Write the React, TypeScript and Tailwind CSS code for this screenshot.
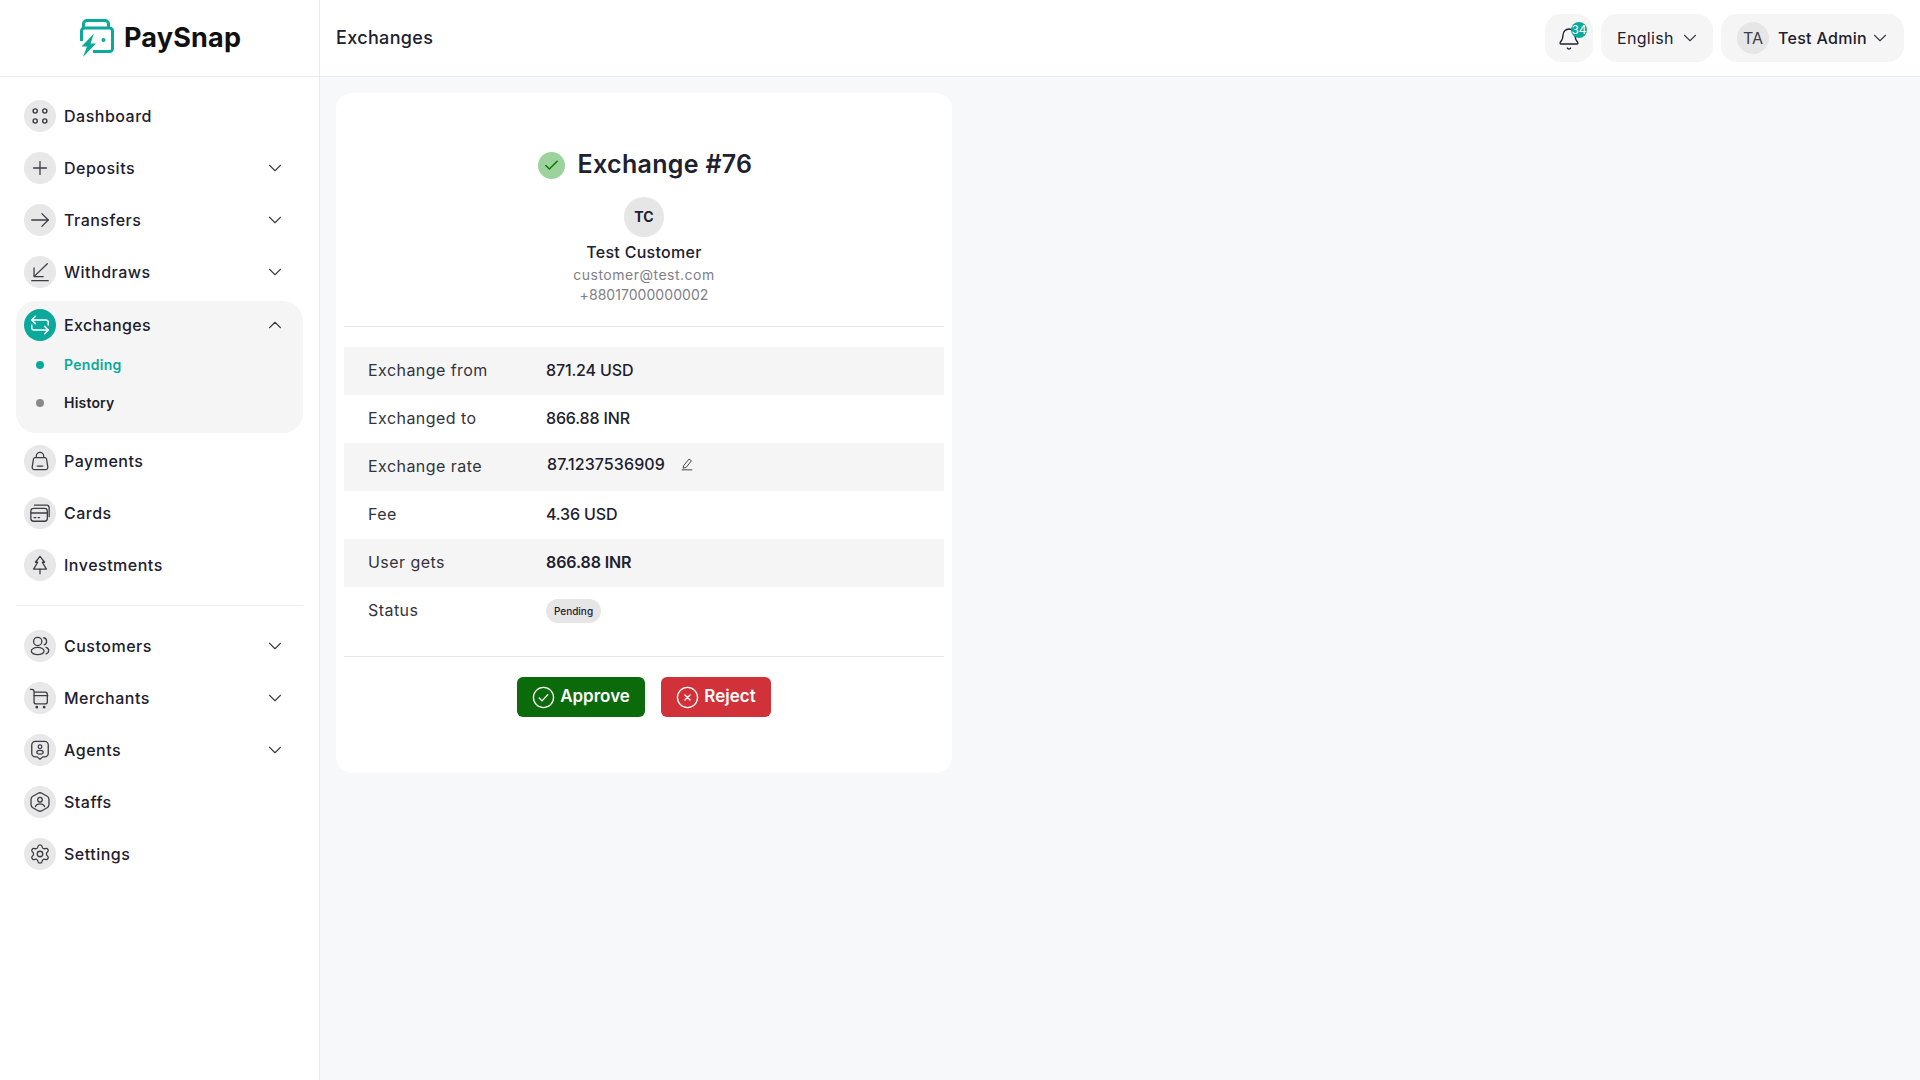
import React from "react";
import { ChevronDown, ChevronUp, Plus, Settings, Bell, Check } from "lucide-react";

const FONT = "font-['Inter','Liberation_Sans',sans-serif]";

type IconProps = { className?: string };

const svgProps = {
  viewBox: "0 0 24 24",
  fill: "none",
  stroke: "currentColor",
  strokeWidth: 1.4,
  strokeLinecap: "round" as const,
  strokeLinejoin: "round" as const,
};

function DotsIcon({ className }: IconProps) {
  return (
    <svg {...svgProps} className={className}>
      <circle cx="7.2" cy="7" r="2.1" />
      <circle cx="16.800" cy="7" r="2.1" />
      <circle cx="7.2" cy="17" r="2.1" />
      <circle cx="16.800" cy="17" r="2.1" />
    </svg>
  );
}

function ArrowIcon({ className }: IconProps) {
  return (
    <svg {...svgProps} className={className}>
      <path d="M3 12h18" />
      <path d="m14 5 7 7-7 7" />
    </svg>
  );
}

function WithdrawIcon({ className }: IconProps) {
  return (
    <svg {...svgProps} className={className}>
      <path d="M20 3 6 16.500" />
      <path d="M5.500 7.500v9.500h10" />
      <path d="M3 21.500h18" />
    </svg>
  );
}

function ExchangeIcon({ className }: IconProps) {
  return (
    <svg {...svgProps} strokeWidth={1.6} className={className}>
      <path d="M7 2.500 3 6.500l4 4" />
      <path d="M3 6.500h15.500a2.500 2.500 0 0 1 2.500 2.500v3" />
      <path d="m17 21.500 4-4-4-4" />
      <path d="M21 17.500H5.500A2.500 2.500 0 0 1 3 15v-3" />
    </svg>
  );
}

function BagIcon({ className }: IconProps) {
  return (
    <svg {...svgProps} className={className}>
      <path d="M8 8V6.500a4 4 0 0 1 8 0V8" />
      <path d="M6.800 8.200h10.400c1 0 1.700.7 1.900 1.600l1.400 8.600c.3 1.600-.9 3.100-2.500 3.100H6c-1.600 0-2.800-1.500-2.500-3.100l1.400-8.600c.2-.9.9-1.600 1.900-1.600z" />
      <path d="M9 17.500h6" />
    </svg>
  );
}

function CardsIcon({ className }: IconProps) {
  return (
    <svg {...svgProps} className={className}>
      <rect x="2" y="7" width="18" height="14" rx="3" />
      <path d="M2 12h18" />
      <path d="M5.500 17h2M10 17h1.500" />
      <path d="M6 3.500h13a3 3 0 0 1 3 3v9.500" />
    </svg>
  );
}

function TreeIcon({ className }: IconProps) {
  return (
    <svg {...svgProps} className={className}>
      <path d="M12 2.500 7 9h2.500L5 16.500h14L14.500 9H17z" />
      <path d="M12 16.500v5" />
    </svg>
  );
}

function UsersIcon({ className }: IconProps) {
  return (
    <svg {...svgProps} className={className}>
      <circle cx="9.500" cy="7" r="4.500" />
      <ellipse cx="9.500" cy="17.500" rx="7" ry="4" />
      <path d="M16 3c2 .3 3.200 2 3.200 4s-1.200 3.300-2.700 3.800" />
      <path d="M18.500 13.500c1.800.5 3 1.800 3 3.500s-1.200 3-3 3.500" />
    </svg>
  );
}

function CartIcon({ className }: IconProps) {
  return (
    <svg {...svgProps} className={className}>
      <path d="M1.500 2.500h1.500c1.500 0 2.500 1 2.500 2.500v11c0 1.500 1 2.500 2.500 2.500h9.500c1.500 0 2.500-1 2.500-2.500V8c0-1.500-1-2.500-2.500-2.500H5.500" />
      <path d="M5.500 9.500h15" />
      <circle cx="8.500" cy="22" r=".8" fill="currentColor" />
      <circle cx="16.500" cy="22" r=".8" fill="currentColor" />
    </svg>
  );
}

function AgentIcon({ className }: IconProps) {
  return (
    <svg {...svgProps} className={className}>
      <path d="M7 2.500h10a4 4 0 0 1 4 4v9a4 4 0 0 1-4 4h-2l-3 2.500-3-2.500H7a4 4 0 0 1-4-4v-9a4 4 0 0 1 4-4z" />
      <circle cx="12" cy="8.500" r="2" />
      <ellipse cx="12" cy="14.500" rx="3.500" ry="2" />
    </svg>
  );
}

function StaffIcon({ className }: IconProps) {
  return (
    <svg {...svgProps} className={className}>
      <path d="M10 2.500a4 4 0 0 1 4 0l5.800 3.300a4 4 0 0 1 2 3.400v5.600a4 4 0 0 1-2 3.400L14 21.500a4 4 0 0 1-4 0l-5.800-3.300a4 4 0 0 1-2-3.400V9.200a4 4 0 0 1 2-3.400z" />
      <circle cx="12" cy="9.500" r="2.500" />
      <path d="M7 17c.8-2 2.700-3 5-3s4.200 1 5 3" />
    </svg>
  );
}

function PencilIcon({ className }: IconProps) {
  return (
    <svg {...svgProps} strokeWidth={1.6} className={className}>
      <path d="M6.500 14.500 15.500 3.500l4 3-9 11.500-4.500 1z" />
      <path d="M3.500 22h17" />
    </svg>
  );
}

function CircleCheck({ className }: IconProps) {
  return (
    <svg {...svgProps} className={className}>
      <circle cx="12" cy="12" r="10.500" />
      <path d="m7.500 12.500 3 3 6-6.500" />
    </svg>
  );
}

function CircleX({ className }: IconProps) {
  return (
    <svg {...svgProps} className={className}>
      <circle cx="12" cy="12" r="10.500" />
      <path d="m9.300 9.300 5.400 5.400M14.700 9.300l-5.400 5.400" />
    </svg>
  );
}

function Logo() {
  return (
    <svg viewBox="0 0 34 38" className="w-[34px] h-[38px]" fill="none">
      <path d="M3.500 10V5a3.500 3.500 0 0 1 3.500-3.500h18A3.500 3.500 0 0 1 28.500 5v5" stroke="#0ba99b" strokeWidth="3" />
      <path
        d="M1.500 22V12a3 3 0 0 1 3-3h25a3 3 0 0 1 3 3v17.500a3 3 0 0 1-3 3H13"
        stroke="#0ba99b"
        strokeWidth="3"
      />
      <circle cx="23.500" cy="21" r="2" fill="#0ba99b" />
      <path
        d="M14 14.500 1.500 27.500H7L3 38l13-13.500h-5.500l3.500-10z"
        fill="#0ba99b"
        stroke="#fff"
        strokeWidth="1.2"
        strokeLinejoin="round"
        paintOrder="stroke"
      />
    </svg>
  );
}

function NavRow({
  label,
  icon,
  chevron,
}: {
  label: string;
  icon: React.ReactNode;
  chevron?: boolean;
}) {
  return (
    <div className="flex items-center h-[52px] pl-6 pr-[33px]">
      <span className="flex items-center justify-center w-8 h-8 rounded-full bg-[#e8e8e8] text-[#3c3c44] shrink-0">
        {icon}
      </span>
      <span className="ml-2 flex-1 text-base font-medium tracking-[0.5px] text-[#20202e]">{label}</span>
      {chevron && <ChevronDown className="w-[22px] h-[22px] text-[#3c3c44]" strokeWidth={1.2} />}
    </div>
  );
}

function Sidebar() {
  const ic = "w-[22px] h-[22px]";
  return (
    <aside className="w-[320px] shrink-0 bg-white border-r border-[#e9eaec] flex flex-col">
      <div className="h-[77px] border-b border-[#e9eaec] flex items-center pl-[80px] gap-[10px]">
        <Logo />
        <span className="text-[27px] font-bold text-[#111] tracking-[0.2px]">PaySnap</span>
      </div>
      <nav className="pt-[13px] flex flex-col">
        <NavRow label="Dashboard" icon={<DotsIcon className="w-6 h-6" />} />
        <NavRow label="Deposits" chevron icon={<Plus className={ic} strokeWidth={1.4} />} />
        <NavRow label="Transfers" chevron icon={<ArrowIcon className={ic} />} />
        <NavRow label="Withdraws" chevron icon={<WithdrawIcon className={ic} />} />

        <div className="mx-4 mt-[3px] mb-[2px] pt-[3px] pb-[11px] rounded-[20px] bg-[#f5f5f5]">
          <div className="flex items-center h-[42px] pl-2 pr-[17px]">
            <span className="flex items-center justify-center w-8 h-8 rounded-full bg-[#0ba99b] text-white">
              <ExchangeIcon className={ic} />
            </span>
            <span className="ml-2 flex-1 text-base font-medium tracking-[0.35px] text-[#20202e]">Exchanges</span>
            <ChevronUp className="w-[22px] h-[22px] text-[#3c3c44]" strokeWidth={1.2} />
          </div>
          <div className="flex items-center h-[38px] pl-5">
            <span className="w-2 h-2 rounded-full bg-[#0ba99b]" />
            <span className="ml-[20px] text-sm font-semibold tracking-[0.3px] text-[#0ba99b]">Pending</span>
          </div>
          <div className="flex items-center h-[38px] pl-5">
            <span className="w-2 h-2 rounded-full bg-[#8a8a8a]" />
            <span className="ml-[20px] text-sm font-semibold tracking-[0.2px] text-[#20202e]">History</span>
          </div>
        </div>

        <NavRow label="Payments" icon={<BagIcon className={ic} />} />
        <NavRow label="Cards" icon={<CardsIcon className={ic} />} />
        <NavRow label="Investments" icon={<TreeIcon className={ic} />} />

        <div className="mx-4 mt-[14px] mb-[14px] h-px bg-[#eeeff1]" />

        <NavRow label="Customers" chevron icon={<UsersIcon className={ic} />} />
        <NavRow label="Merchants" chevron icon={<CartIcon className={ic} />} />
        <NavRow label="Agents" chevron icon={<AgentIcon className={ic} />} />
        <NavRow label="Staffs" icon={<StaffIcon className={ic} />} />
        <NavRow label="Settings" icon={<Settings className={ic} strokeWidth={1.4} />} />
      </nav>
    </aside>
  );
}

function Header() {
  return (
    <header className="h-[77px] shrink-0 bg-white border-b border-[#e9eaec] flex items-center pl-4 pr-4">
      <h1 className="flex-1 text-lg font-medium tracking-[0.35px] text-[#20202e]">Exchanges</h1>
      <div className="flex items-center gap-2">
        <div className="relative w-12 h-12 rounded-2xl bg-[#f5f5f5] flex items-center justify-center">
          <Bell className="w-6 h-6 text-[#20202e] mt-[2px]" strokeWidth={1.3} />
          <span className="absolute left-[26px] top-2 w-4 h-4 rounded-full bg-[#0ba99b] text-white text-xs leading-4 text-center">
            34
          </span>
        </div>
        <div className="h-12 w-[112px] rounded-2xl bg-[#f5f5f5] flex items-center pl-4 gap-[5px] text-base text-[#20202e] tracking-[0.3px]">
          <span className="pb-px">English</span>
          <ChevronDown className="w-[22px] h-[22px] text-[#3c3c44]" strokeWidth={1.2} />
        </div>
        <div className="h-12 w-[183px] rounded-2xl bg-[#f5f5f5] flex items-center pl-4 text-base text-[#20202e]">
          <span className="w-8 h-8 rounded-full bg-[#e6e6e6] flex items-center justify-center text-[#3c3c44]">TA</span>
          <span className="ml-[9px] pb-px font-medium tracking-[0.3px]">Test Admin</span>
          <ChevronDown className="ml-[2px] w-[22px] h-[22px] text-[#3c3c44]" strokeWidth={1.2} />
        </div>
      </div>
    </header>
  );
}

function Row({ label, children, shaded }: { label: string; children: React.ReactNode; shaded?: boolean }) {
  return (
    <div className={`flex items-center h-12 pl-6 pb-[2px] ${shaded ? "bg-[#f5f5f5]" : ""}`}>
      <span className="w-[178px] text-base tracking-[0.45px] text-[#33333d]">{label}</span>
      {children}
    </div>
  );
}

const valueCls = "text-base font-medium tracking-[-0.15px] text-[#20202e]";

function ExchangeCard() {
  return (
    <div className="w-[616px] h-[680px] bg-white rounded-2xl px-2 flex flex-col">
      <div className="pt-[56px] h-[234px] border-b border-[#e5e6e8] flex flex-col items-center">
        <div className="flex items-center gap-[13px] h-8 pl-[2px]">
          <span className="w-[27px] h-[27px] rounded-full bg-[#9cd29c] flex items-center justify-center">
            <Check className="w-[17px] h-[17px] text-[#0b7a0b]" strokeWidth={2.2} />
          </span>
          <span className="text-[25px] font-semibold tracking-[0.3px] text-[#20202e]">Exchange #76</span>
        </div>
        <span className="mt-[16px] w-10 h-10 rounded-full bg-[#e6e6e6] flex items-center justify-center text-sm font-bold text-[#20202e]">
          TC
        </span>
        <span className="mt-[3px] text-base font-medium tracking-[0.3px] text-[#20202e]">Test Customer</span>
        <span className="mt-[1px] text-sm text-[#808089] tracking-[0.5px] leading-5">customer@test.com</span>
        <span className="text-sm text-[#808089] tracking-[0.05px] leading-5">+88017000000002</span>
      </div>

      <div className="mt-5 h-[310px] border-b border-[#e5e6e8]">
        <Row label="Exchange from" shaded>
          <span className={valueCls}>871.24 USD</span>
        </Row>
        <Row label="Exchanged to">
          <span className={valueCls}>866.88 INR</span>
        </Row>
        <Row label="Exchange rate" shaded>
          <span className="text-base font-medium tracking-[0.1px] text-[#20202e] -mt-[4px] ml-px">87.1237536909</span>
          <PencilIcon className="ml-[15px] -mt-[4px] w-[14px] h-[14px] text-[#3c3c44]" />
        </Row>
        <Row label="Fee">
          <span className={valueCls}>4.36 USD</span>
        </Row>
        <Row label="User gets" shaded>
          <span className="text-base font-semibold tracking-[-0.1px] text-[#20202e]">866.88 INR</span>
        </Row>
        <Row label="Status">
          <span className="mt-[2px] w-[55px] h-6 rounded-full bg-[#e6e6e6] flex items-center justify-center text-[10px] font-medium text-[#20202e]">
            Pending
          </span>
        </Row>
      </div>

      <div className="mt-5 flex justify-center gap-4">
        <button className="w-[128px] h-10 rounded-md bg-[#0b6b0b] text-white text-[17px] font-semibold flex items-center justify-center gap-[5px]">
          <CircleCheck className="w-[23px] h-[23px]" />
          Approve
        </button>
        <button className="w-[110px] h-10 rounded-md bg-[#d13239] text-white text-[17px] font-semibold flex items-center justify-center gap-[5px]">
          <CircleX className="w-[23px] h-[23px]" />
          Reject
        </button>
      </div>
    </div>
  );
}

export default function App() {
  return (
    <div className={`flex min-h-screen h-screen overflow-hidden bg-[#f7f8fa] ${FONT}`}>
      <Sidebar />
      <div className="flex-1 flex flex-col">
        <Header />
        <main className="flex-1 pl-4 pt-4">
          <ExchangeCard />
        </main>
      </div>
    </div>
  );
}
